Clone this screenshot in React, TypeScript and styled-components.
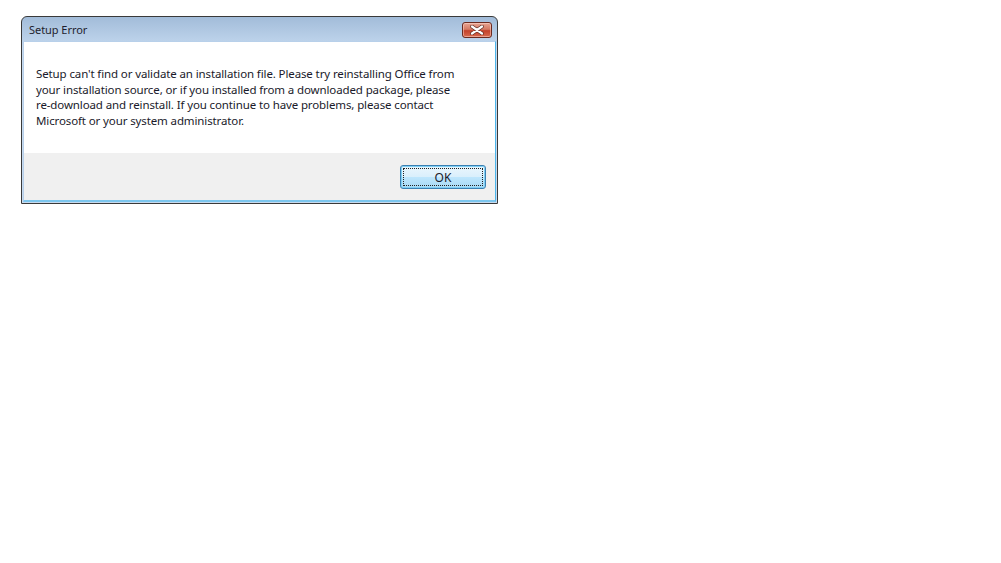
import React from "react";
import styled, { createGlobalStyle } from "styled-components";

const Global = createGlobalStyle`
  html, body { margin: 0; padding: 0; background: #ffffff; }
  body { font-family: "Noto Sans", "Open Sans", sans-serif; }
`;

const Page = styled.div`
  padding: 16px 0 0 21px;
`;

const Window = styled.div`
  width: 477px;
  border: 1px solid #3a3a3a;
  border-radius: 6px 6px 0 0;
  background: linear-gradient(#a2bcd9 0px, #bcd2ea 24px, #c8daee 30px);
  display: flex;
  flex-direction: column;
  box-sizing: border-box;
  padding: 0 1px 1px 1px;
`;

const TitleBar = styled.div`
  height: 24px;
  display: flex;
  align-items: center;
  justify-content: space-between;
  padding: 0 4px 0 6px;
`;

const Title = styled.span`
  font-family: "Noto Sans", sans-serif;
  font-size: 11px;
  color: #1e1e2e;
  letter-spacing: -0.05px;
`;

const CloseButton = styled.div`
  width: 30px;
  height: 16px;
  margin-top: 1px;
  box-sizing: border-box;
  border: 1px solid #6b2a1f;
  border-radius: 3px;
  background: linear-gradient(#e8a593 0%, #d47a63 45%, #c3412a 55%, #d86a4e 100%);
  box-shadow: inset 0 0 0 1px rgba(255, 220, 210, 0.5);
  display: flex;
  align-items: center;
  justify-content: center;
`;

const Client = styled.div`
  border-left: 1px solid #b8d0ea;
  border-right: 1px solid #4db6ea;
  border-bottom: 2px solid #7cc6ee;
  border-top: 1px solid #b8d0ea;
  background: #ffffff;
  display: flex;
  flex-direction: column;
`;

const Message = styled.div`
  padding: 24px 10px 25px 12px;
  font-family: "Noto Sans", sans-serif;
  font-size: 11.5px;
  line-height: 15.5px;
  color: #1a1a2a;
  letter-spacing: -0.12px;
  white-space: nowrap;
`;

const Footer = styled.div`
  background: #f0f0f0;
  height: 47px;
  display: flex;
  justify-content: flex-end;
  align-items: flex-start;
  padding: 12px 9px 0 0;
  box-sizing: border-box;
`;

const OkButton = styled.button`
  width: 86px;
  height: 24px;
  box-sizing: border-box;
  border: 1px solid #3c7fb1;
  border-radius: 3px;
  background: linear-gradient(#ebf6fd 0%, #d9effc 50%, #bee6fd 51%, #a7d9f5 100%);
  box-shadow: inset 0 0 0 1px #7fd0f5;
  font-family: "Noto Sans", sans-serif;
  font-size: 12px;
  color: #1a1a2a;
  padding: 0;
  position: relative;
  &::after {
    content: "";
    position: absolute;
    inset: 2px;
    border: 1px dotted #222;
  }
`;

export default function App() {
  return (
    <>
      <Global />
      <Page>
        <Window>
          <TitleBar>
            <Title>Setup Error</Title>
            <CloseButton>
              <svg width="14" height="10" viewBox="0 0 14 10">
                <path
                  d="M2 1.5 L12 8.5 M12 1.5 L2 8.5"
                  stroke="#5a2a22"
                  strokeWidth="3.6"
                  strokeLinecap="round"
                />
                <path
                  d="M2 1.5 L12 8.5 M12 1.5 L2 8.5"
                  stroke="#ffffff"
                  strokeWidth="2.2"
                  strokeLinecap="round"
                />
              </svg>
            </CloseButton>
          </TitleBar>
          <Client>
            <Message>
              Setup can't find or validate an installation file. Please try reinstalling Office from
              <br />
              your installation source, or if you installed from a downloaded package, please
              <br />
              re-download and reinstall. If you continue to have problems, please contact
              <br />
              Microsoft or your system administrator.
            </Message>
            <Footer>
              <OkButton>OK</OkButton>
            </Footer>
          </Client>
        </Window>
      </Page>
    </>
  );
}
